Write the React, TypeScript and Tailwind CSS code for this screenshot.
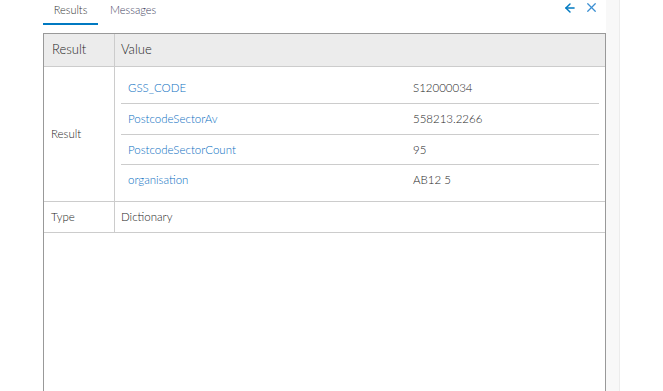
import { ArrowLeft, X } from 'lucide-react'

const attributes = [
  { key: 'GSS_CODE', value: 'S12000034', h: 'h-[31px]' },
  { key: 'PostcodeSectorAv', value: '558213.2266', h: 'h-[31px]' },
  { key: 'PostcodeSectorCount', value: '95', h: 'h-[30px]' },
  { key: 'organisation', value: 'AB12 5', h: 'h-[30px]' },
]

export default function App() {
  return (
    <div className="flex h-[391px] w-[663px] overflow-hidden bg-white font-['Lato',sans-serif] font-light text-[#262626]">
      <div className="relative w-[606px] shrink-0">
        {/* tabs */}
        <div className="flex h-[25px] pl-[43px]">
          <button className="h-[25px] w-[55px] border-b-2 border-[#0079c1] pb-[3px] text-[11px] text-[#333]">
            Results
          </button>
          <button className="ml-[12px] h-[25px] pb-[5px] text-[11px] text-[#3d3d5c]">Messages</button>
        </div>

        <div className="absolute right-[7px] top-0 flex items-center gap-[7px] text-[#0079c1]">
          <ArrowLeft className="h-[14px] w-[14px]" strokeWidth={2.5} />
          <X className="h-[15px] w-[15px] text-[#3b8fd2]" strokeWidth={2} />
        </div>

        {/* table */}
        <div className="ml-[43px] mt-[8px] h-[400px] border-x border-t border-[#999]">
          <div className="flex h-[33px] border-b border-[#ccc] bg-[#ececec] text-[13px]">
            <div className="flex w-[71px] items-center border-r border-[#ccc] pl-[8px]">Result</div>
            <div className="flex items-center pl-[6px]">Value</div>
          </div>

          <div className="flex border-b border-[#ccc] text-[11.5px]">
            <div className="flex w-[71px] items-center border-r border-[#ccc] pl-[7px]">Result</div>
            <div className="flex-1 py-[6px] pl-[6px] pr-[6px]">
              {attributes.map((row, i) => (
                <div
                  key={row.key}
                  className={`grid ${row.h} grid-cols-[285px_1fr] items-center px-[7px] ${
                    i < attributes.length - 1 ? 'border-b border-[#ccc]' : ''
                  }`}
                >
                  <span className="text-[#0a6fbf]">{row.key}</span>
                  <span>{row.value}</span>
                </div>
              ))}
            </div>
          </div>

          <div className="flex h-[31px] border-b border-[#ccc] text-[11.5px]">
            <div className="flex w-[71px] items-center border-r border-[#ccc] pl-[7px]">Type</div>
            <div className="flex items-center pl-[6px]">Dictionary</div>
          </div>
        </div>
      </div>
      <div className="h-full w-[14px] border-r border-[#ececec] bg-[#f8f8f8]" />
    </div>
  )
}
